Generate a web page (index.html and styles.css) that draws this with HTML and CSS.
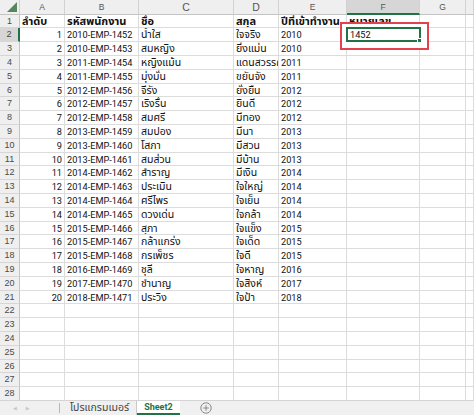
FILE: index.html
```html
<!DOCTYPE html>
<html lang="th">
<head>
<meta charset="utf-8">
<title>Sheet2</title>
<link rel="stylesheet" href="styles.css">
</head>
<body>
<div class="app">
  <div class="sheet">
    <div class="row colhead">
      <div class="c corner"><span class="tri"></span></div>
      <div class="c">A</div><div class="c">B</div><div class="c">C</div><div class="c">D</div><div class="c">E</div><div class="c sel-col">F</div><div class="c">G</div><div class="c"></div>
    </div>
    <div class="row bold"><div class="c rh">1</div><div class="c">ลำดับ</div><div class="c">รหัสพนักงาน</div><div class="c">ชื่อ</div><div class="c">สกุล</div><div class="c">ปีที่เข้าทำงาน</div><div class="c">หมายเลข</div><div class="c"></div><div class="c"></div></div>
    <div class="row"><div class="c rh sel-row">2</div><div class="c num">1</div><div class="c">2010-EMP-1452</div><div class="c">น้ำใส</div><div class="c">ใจจริง</div><div class="c">2010</div><div class="c active">1452<span class="handle"></span></div><div class="c"></div><div class="c"></div></div>
    <div class="row"><div class="c rh">3</div><div class="c num">2</div><div class="c">2010-EMP-1453</div><div class="c">สมหญิง</div><div class="c">ยิ่งแม่น</div><div class="c">2010</div><div class="c"></div><div class="c"></div><div class="c"></div></div>
    <div class="row"><div class="c rh">4</div><div class="c num">3</div><div class="c">2011-EMP-1454</div><div class="c">หญิงแม้น</div><div class="c">แดนสวรรค์</div><div class="c">2011</div><div class="c"></div><div class="c"></div><div class="c"></div></div>
    <div class="row"><div class="c rh">5</div><div class="c num">4</div><div class="c">2011-EMP-1455</div><div class="c">มุ่งมั่น</div><div class="c">ขยันจัง</div><div class="c">2011</div><div class="c"></div><div class="c"></div><div class="c"></div></div>
    <div class="row"><div class="c rh">6</div><div class="c num">5</div><div class="c">2012-EMP-1456</div><div class="c">จีรัง</div><div class="c">ยั่งยืน</div><div class="c">2012</div><div class="c"></div><div class="c"></div><div class="c"></div></div>
    <div class="row"><div class="c rh">7</div><div class="c num">6</div><div class="c">2012-EMP-1457</div><div class="c">เริงรื่น</div><div class="c">ยินดี</div><div class="c">2012</div><div class="c"></div><div class="c"></div><div class="c"></div></div>
    <div class="row"><div class="c rh">8</div><div class="c num">7</div><div class="c">2012-EMP-1458</div><div class="c">สมศรี</div><div class="c">มีทอง</div><div class="c">2012</div><div class="c"></div><div class="c"></div><div class="c"></div></div>
    <div class="row"><div class="c rh">9</div><div class="c num">8</div><div class="c">2013-EMP-1459</div><div class="c">สมปอง</div><div class="c">มีนา</div><div class="c">2013</div><div class="c"></div><div class="c"></div><div class="c"></div></div>
    <div class="row"><div class="c rh">10</div><div class="c num">9</div><div class="c">2013-EMP-1460</div><div class="c">โสภา</div><div class="c">มีสวน</div><div class="c">2013</div><div class="c"></div><div class="c"></div><div class="c"></div></div>
    <div class="row"><div class="c rh">11</div><div class="c num">10</div><div class="c">2013-EMP-1461</div><div class="c">สมส่วน</div><div class="c">มีบ้าน</div><div class="c">2013</div><div class="c"></div><div class="c"></div><div class="c"></div></div>
    <div class="row"><div class="c rh">12</div><div class="c num">11</div><div class="c">2014-EMP-1462</div><div class="c">สำราญ</div><div class="c">มีเงิน</div><div class="c">2014</div><div class="c"></div><div class="c"></div><div class="c"></div></div>
    <div class="row"><div class="c rh">13</div><div class="c num">12</div><div class="c">2014-EMP-1463</div><div class="c">ประเมิน</div><div class="c">ใจใหญ่</div><div class="c">2014</div><div class="c"></div><div class="c"></div><div class="c"></div></div>
    <div class="row"><div class="c rh">14</div><div class="c num">13</div><div class="c">2014-EMP-1464</div><div class="c">ศรีไพร</div><div class="c">ใจเย็น</div><div class="c">2014</div><div class="c"></div><div class="c"></div><div class="c"></div></div>
    <div class="row"><div class="c rh">15</div><div class="c num">14</div><div class="c">2014-EMP-1465</div><div class="c">ดวงเด่น</div><div class="c">ใจกล้า</div><div class="c">2014</div><div class="c"></div><div class="c"></div><div class="c"></div></div>
    <div class="row"><div class="c rh">16</div><div class="c num">15</div><div class="c">2015-EMP-1466</div><div class="c">สุภา</div><div class="c">ใจแข็ง</div><div class="c">2015</div><div class="c"></div><div class="c"></div><div class="c"></div></div>
    <div class="row"><div class="c rh">17</div><div class="c num">16</div><div class="c">2015-EMP-1467</div><div class="c">กล้าแกร่ง</div><div class="c">ใจเด็ด</div><div class="c">2015</div><div class="c"></div><div class="c"></div><div class="c"></div></div>
    <div class="row"><div class="c rh">18</div><div class="c num">17</div><div class="c">2015-EMP-1468</div><div class="c">กรเพ็ชร</div><div class="c">ใจดี</div><div class="c">2015</div><div class="c"></div><div class="c"></div><div class="c"></div></div>
    <div class="row"><div class="c rh">19</div><div class="c num">18</div><div class="c">2016-EMP-1469</div><div class="c">ชุลี</div><div class="c">ใจหาญ</div><div class="c">2016</div><div class="c"></div><div class="c"></div><div class="c"></div></div>
    <div class="row"><div class="c rh">20</div><div class="c num">19</div><div class="c">2017-EMP-1470</div><div class="c">ชำนาญ</div><div class="c">ใจสิงห์</div><div class="c">2017</div><div class="c"></div><div class="c"></div><div class="c"></div></div>
    <div class="row"><div class="c rh">21</div><div class="c num">20</div><div class="c">2018-EMP-1471</div><div class="c">ประวิง</div><div class="c">ใจป้า</div><div class="c">2018</div><div class="c"></div><div class="c"></div><div class="c"></div></div>
    <div class="row"><div class="c rh">22</div><div class="c"></div><div class="c"></div><div class="c"></div><div class="c"></div><div class="c"></div><div class="c"></div><div class="c"></div><div class="c"></div></div>
    <div class="row"><div class="c rh">23</div><div class="c"></div><div class="c"></div><div class="c"></div><div class="c"></div><div class="c"></div><div class="c"></div><div class="c"></div><div class="c"></div></div>
    <div class="row"><div class="c rh">24</div><div class="c"></div><div class="c"></div><div class="c"></div><div class="c"></div><div class="c"></div><div class="c"></div><div class="c"></div><div class="c"></div></div>
    <div class="row"><div class="c rh">25</div><div class="c"></div><div class="c"></div><div class="c"></div><div class="c"></div><div class="c"></div><div class="c"></div><div class="c"></div><div class="c"></div></div>
    <div class="row"><div class="c rh">26</div><div class="c"></div><div class="c"></div><div class="c"></div><div class="c"></div><div class="c"></div><div class="c"></div><div class="c"></div><div class="c"></div></div>
    <div class="row"><div class="c rh">27</div><div class="c"></div><div class="c"></div><div class="c"></div><div class="c"></div><div class="c"></div><div class="c"></div><div class="c"></div><div class="c"></div></div>
    <div class="row"><div class="c rh">28</div><div class="c"></div><div class="c"></div><div class="c"></div><div class="c"></div><div class="c"></div><div class="c"></div><div class="c"></div><div class="c"></div></div>
    <div class="annot"></div>
  </div>
  <div class="tabs">
    <div class="nav"><span class="arrow">&#9664;</span><span class="arrow">&#9654;</span></div>
    <div class="tab thai">โปรแกรมเมอร์</div>
    <div class="tab current">Sheet2</div>
    <div class="add">
      <svg width="12" height="12" viewBox="0 0 12 12"><circle cx="6" cy="6" r="5.2" fill="none" stroke="#8a8a8a" stroke-width="1"/><path d="M6 3.2V8.8M3.2 6H8.8" stroke="#8a8a8a" stroke-width="1"/></svg>
    </div>
  </div>
</div>
</body>
</html>
```
FILE: styles.css
```css
html, body {
  margin: 0;
  padding: 0;
  background: #ffffff;
  overflow: hidden;
}
.app {
  width: 474px;
  height: 415px;
  display: flex;
  flex-direction: column;
  font-family: Roboto, "Noto Sans Thai", Tahoma, "Leelawadee UI", sans-serif;
  font-size: 9.2px;
  color: #111;
}
.sheet {
  position: relative;
  height: 400px;
  overflow: hidden;
}
.row {
  display: grid;
  grid-template-columns: 20px 45px 74px 95px 45px 68px 73px 46px 1fr;
  height: 13.8px;
}
.c {
  box-sizing: border-box;
  border-right: 1px solid #dcdcdc;
  border-bottom: 1px solid #dcdcdc;
  padding: 0 2px;
  white-space: nowrap;
  overflow: hidden;
  line-height: 13px;
}
.row .c:nth-child(4),
.row .c:nth-child(5) {
  font-size: 10.5px;
}
.bold .c {
  font-weight: bold;
  font-size: 11px;
}
.row.bold .c:nth-child(4),
.row.bold .c:nth-child(5) {
  font-size: 11px;
}
.bold .c.rh { font-weight: normal; }
.num { text-align: right; }
.colhead { height: 14.6px; }
.colhead .c {
  background: #efefef;
  color: #555;
  text-align: center;
  border-right-color: #d2d2d2;
  border-bottom-color: #c4c4c4;
  line-height: 14px;
  font-family: "Liberation Sans", sans-serif;
  font-size: 8.5px;
}
.colhead .c.sel-col {
  background: #d6d6d6;
  border-bottom: 2px solid #217346;
}
.corner { position: relative; }
.tri {
  position: absolute;
  right: 2px;
  bottom: 2px;
  width: 0;
  height: 0;
  border-left: 10px solid transparent;
  border-bottom: 10px solid #56855f;
}
.row .c.rh {
  background: #efefef;
  color: #4a4a4a;
  text-align: center;
  border-right-color: #c4c4c4;
  border-bottom-color: #d6d6d6;
  font-family: "Liberation Sans", sans-serif;
  font-size: 9px;
  padding: 0;
}
.row .c.rh.sel-row {
  background: #d6d6d6;
  border-right: 2px solid #217346;
}
.annot {
  position: absolute;
  left: 340px;
  top: 21.5px;
  width: 89px;
  height: 28px;
  box-sizing: border-box;
  border: 2px solid #e0424e;
  background: #ffffff;
  z-index: 1;
}
.active {
  position: relative;
  z-index: 2;
  background: #ffffff;
  border: 2px solid #217346;
  margin: -1px -1px 0 -1px;
  padding-left: 2px;
  line-height: 11px;
  overflow: visible;
}
.handle {
  position: absolute;
  right: -3px;
  bottom: -3px;
  width: 3px;
  height: 3px;
  background: #217346;
  border: 1px solid #ffffff;
}
.tabs {
  box-sizing: border-box;
  height: 15px;
  background: #f0f0f0;
  border-top: 1px solid #d4d4d4;
  display: flex;
  align-items: stretch;
  font-size: 9px;
}
.nav {
  width: 60px;
  box-sizing: border-box;
  display: flex;
  align-items: center;
  gap: 9px;
  padding-left: 13px;
  border-right: 1px solid #b8b8b8;
  margin: 2px 0;
}
.arrow {
  color: #c8c8c8;
  font-size: 5px;
  font-family: "DejaVu Sans", sans-serif;
}
.tab {
  padding: 0 7px 0 10px;
  color: #444;
  line-height: 13px;
  border-right: 1px solid #c8c8c8;
}
.tab.thai {
  font-size: 10.5px;
}
.tab.current {
  background: #ffffff;
  color: #217346;
  font-weight: bold;
  padding: 0 7px;
  border-right: none;
  border-bottom: 2px solid #217346;
  line-height: 12px;
}
.add {
  margin-left: 20px;
  display: flex;
  align-items: center;
}
```
